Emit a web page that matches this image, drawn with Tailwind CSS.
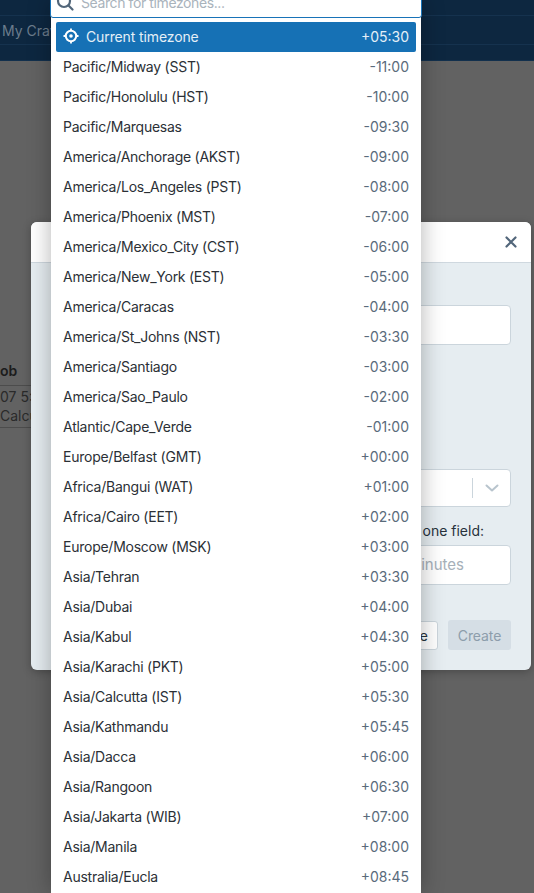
<!DOCTYPE html>
<html><head><meta charset="utf-8"><script src="https://cdn.jsdelivr.net/npm/@tailwindcss/browser@4"></script></head>
<body class="m-0">
<div class="relative w-[534px] h-[893px] overflow-hidden bg-[#626262] font-['Inter',sans-serif] text-[14px]">
  <!-- page behind the scrim -->
  <div class="h-[61px] bg-[#0d2740] pt-[15px] border-b border-[#12304d]">
    <div class="h-[30px] flex items-center border-y border-[#15324e] text-[#6b7c8c] pl-[2px]">My Crav</div>
  </div>
  <div class="absolute left-0 top-[361px] w-[31px] text-[#1c1c1c] leading-[20px] whitespace-nowrap">
    <div class="font-semibold">ob</div>
    <div class="mt-[4px] pt-px border-t border-[#4c4c4c] text-[#2a2a2a] leading-[19px]">07 5:</div>
    <div class="pb-px border-b border-[#4c4c4c] text-[#2a2a2a]">Calcu</div>
  </div>
  <!-- modal -->
  <div class="absolute left-[31px] top-[222px] w-[500px] h-[448px] rounded-[6px] bg-[#e6edf1] shadow-[0_2px_8px_rgba(0,0,0,0.25)] overflow-hidden">
    <div class="h-[41px] bg-white border-b border-[#cfd8df] flex items-center justify-end pr-[13px]">
      <svg width="14" height="14" viewBox="0 0 14 14" fill="none" stroke="#52667a" stroke-width="2.2" stroke-linecap="round"><path d="M2.5 2.5l9 9M11.5 2.5l-9 9"/></svg>
    </div>
    <div class="flex flex-col items-end pr-[20px] pt-[42px]">
      <div class="w-[300px] h-[40px] bg-white border border-[#cbd5dc] rounded-[4px]"></div>
      <div class="mt-[124px] w-[300px] h-[38px] bg-white border border-[#cbd5dc] rounded-[4px] flex items-center justify-end">
        <div class="w-px h-[20px] bg-[#cbd5dc]"></div>
        <div class="w-[37px] flex justify-center"><svg width="14" height="8" viewBox="0 0 14 8" fill="none" stroke="#b8c4cd" stroke-width="2" stroke-linecap="round" stroke-linejoin="round"><path d="M1.5 1.5L7 6.5l5.500-5"/></svg></div>
      </div>
      <div class="mt-[14px] h-[20px] leading-[20px] text-[#27323c] pr-[27px]">one field:</div>
      <div class="mt-[4px] w-[300px] h-[40px] bg-white border border-[#cbd5dc] rounded-[4px] flex items-center justify-end pr-[46px] text-[#a6b0b9] text-[15px]">inutes</div>
      <div class="mt-[35px] flex items-center gap-[10px]">
        <div class="w-[60px] h-[29px] bg-white border border-[#cbd5dc] rounded-[3px] flex items-center justify-end pr-[9px] text-[#27323c]">e</div>
        <div class="w-[63px] h-[30px] bg-[#d5dee5] rounded-[3px] flex items-center justify-center text-[#8d9dab] tracking-[-0.1px]">Create</div>
      </div>
    </div>
  </div>
  <!-- timezone dropdown -->
  <div class="absolute left-[51px] top-0 w-[370px] h-[893px] bg-white shadow-[0_0_22px_rgba(0,0,0,0.3)]">
    <div class="absolute -left-[1px] -top-[10px] w-[372px] h-[28px] bg-white border border-[#1873b8] rounded-[3px] flex items-end pb-[4px] overflow-hidden">
      <svg class="absolute left-[5px] top-[2px]" width="18" height="18" viewBox="0 0 18 18" fill="none" stroke="#52667a" stroke-width="2.200" stroke-linecap="round"><circle cx="8" cy="8" r="6"/><path d="M12.500 12.500L16.500 16.500"/></svg>
      <span class="ml-[30px] text-[#a9b3bc] leading-[20px] tracking-[-0.4px]">Search for timezones...</span>
    </div>
    <div class="absolute left-0 right-0 top-[22px]">
      <div class="mx-[5px] h-[30px] pb-[2px] bg-[#1671b5] rounded-[2px] flex items-center justify-between pl-[7px] pr-[7px] text-[#e4eff7]">
        <span class="flex items-center gap-[7px] tracking-[-0.12px]">
          <svg width="16" height="16" viewBox="0 0 16 16" fill="none" stroke="#fff"><circle cx="8" cy="8" r="5.200" stroke-width="2"/><circle cx="8" cy="8" r="1.800" fill="#fff" stroke="none"/><path d="M8 0.500v2.500M8 13v2.500M0.500 8h2.500M13 8h2.500" stroke-width="1.800"/></svg>
          Current timezone</span><span>+05:30</span>
      </div>
      <div class="flex flex-col px-[12px] text-[#2b3036] tracking-[-0.25px] [&>div]:h-[30px] [&>div]:pb-[2px] [&>div]:flex [&>div]:items-center [&>div]:justify-between [&_span]:text-[#5a6b7b] [&_span]:tracking-normal">
        <div>Pacific/Midway (SST)<span>-11:00</span></div>
        <div>Pacific/Honolulu (HST)<span>-10:00</span></div>
        <div>Pacific/Marquesas<span>-09:30</span></div>
        <div>America/Anchorage (AKST)<span>-09:00</span></div>
        <div>America/Los_Angeles (PST)<span>-08:00</span></div>
        <div>America/Phoenix (MST)<span>-07:00</span></div>
        <div>America/Mexico_City (CST)<span>-06:00</span></div>
        <div>America/New_York (EST)<span>-05:00</span></div>
        <div>America/Caracas<span>-04:00</span></div>
        <div>America/St_Johns (NST)<span>-03:30</span></div>
        <div>America/Santiago<span>-03:00</span></div>
        <div>America/Sao_Paulo<span>-02:00</span></div>
        <div>Atlantic/Cape_Verde<span>-01:00</span></div>
        <div>Europe/Belfast (GMT)<span>+00:00</span></div>
        <div>Africa/Bangui (WAT)<span>+01:00</span></div>
        <div>Africa/Cairo (EET)<span>+02:00</span></div>
        <div>Europe/Moscow (MSK)<span>+03:00</span></div>
        <div>Asia/Tehran<span>+03:30</span></div>
        <div>Asia/Dubai<span>+04:00</span></div>
        <div>Asia/Kabul<span>+04:30</span></div>
        <div>Asia/Karachi (PKT)<span>+05:00</span></div>
        <div>Asia/Calcutta (IST)<span>+05:30</span></div>
        <div>Asia/Kathmandu<span>+05:45</span></div>
        <div>Asia/Dacca<span>+06:00</span></div>
        <div>Asia/Rangoon<span>+06:30</span></div>
        <div>Asia/Jakarta (WIB)<span>+07:00</span></div>
        <div>Asia/Manila<span>+08:00</span></div>
        <div>Australia/Eucla<span>+08:45</span></div>
      </div>
    </div>
  </div>
</div>
</body></html>
